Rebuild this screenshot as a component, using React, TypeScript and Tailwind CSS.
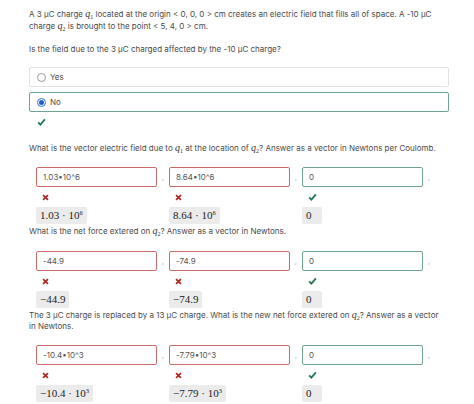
import React from 'react';

const sans = { fontFamily: 'Inter, "Noto Sans", sans-serif' };

function Q({ n }: { n: number }) {
  return (
    <span className="font-['Liberation_Serif',serif] italic text-[10px] leading-[11px] text-[#333]">
      q<span className="relative top-[2px] text-[6px] not-italic leading-none">{n}</span>
    </span>
  );
}

function Check() {
  return (
    <svg viewBox="0 0 12 10" className="w-[9px] h-[8px]">
      <path d="M1.5 5.5 L4.5 8.5 L10.5 1.5" fill="none" stroke="#217a52" strokeWidth="2.4" />
    </svg>
  );
}

function Cross() {
  return (
    <svg viewBox="0 0 10 10" className="w-[7px] h-[7px]">
      <path d="M1.5 1.5 L8.5 8.5 M8.5 1.5 L1.5 8.5" fill="none" stroke="#b3261e" strokeWidth="2.4" />
    </svg>
  );
}

type Cell = { input: string; ok: boolean; answer: React.ReactNode };

function VectorRow({ cells }: { cells: Cell[] }) {
  return (
    <div className="flex pl-[7px]">
      {cells.map((c, i) => (
        <div key={i} className="flex">
          <div className="flex flex-col w-[121px]">
            <div
              className={`h-[20px] border rounded-[2px] bg-white flex items-center pl-[6px] text-[8px] text-[#555] ${
                c.ok ? 'border-[#6fa58c]' : 'border-[#cd6b6b]'
              }`}
            >
              {c.input}
            </div>
            <div className="h-[20px] flex items-center pl-[6px]">{c.ok ? <Check /> : <Cross />}</div>
            <div className="flex">
              <div className="h-[17px] min-w-[20px] bg-[#ebebeb] rounded-[2px] px-[4px] flex items-center font-['Liberation_Serif',serif] text-[11px] text-[#222]">
                {c.answer}
              </div>
            </div>
          </div>
          <div className="w-[12px] h-[20px] flex items-end justify-center pb-[4px] text-[8px] text-[#bbb]">,</div>
        </div>
      ))}
    </div>
  );
}

function Pow({ base, exp }: { base: string; exp: string }) {
  return (
    <span>
      {base} · 10<span className="relative -top-[4px] text-[6.5px]">{exp}</span>
    </span>
  );
}

export default function App() {
  return (
    <div className="w-[474px] h-[404px] bg-white overflow-hidden pl-[29px] pr-[20px] pt-[8px] text-[8px] leading-[11px] text-[#4a4a4a]" style={sans}>
      <p>
        A 3 μC charge <Q n={1} /> located at the origin &lt; 0, 0, 0 &gt; cm creates an electric field that fills all of space. A -10 μC charge <Q n={2} /> is brought to the point &lt; 5, 4, 0 &gt; cm.
      </p>
      <p className="mt-[12px]">Is the field due to the 3 μC charged affected by the -10 μC charge?</p>

      <div className="mt-[12px] mr-[5px] flex flex-col gap-[5px]">
        <div className="h-[20px] border border-[#e2e2e2] rounded-[2px] flex items-center pl-[7px] gap-[4px]">
          <span className="w-[9px] h-[9px] rounded-full border border-[#999] bg-white" />
          <span>Yes</span>
        </div>
        <div className="h-[20px] border border-[#6fa58c] rounded-[2px] flex items-center pl-[7px] gap-[4px]">
          <span className="w-[9px] h-[9px] rounded-full border border-[#2f6fd6] bg-white flex items-center justify-center">
            <span className="w-[5px] h-[5px] rounded-full bg-[#1f5fd1]" />
          </span>
          <span>No</span>
        </div>
      </div>
      <div className="h-[20px] flex items-center pl-[8px]">
        <Check />
      </div>

      <p className="mt-[10px]">
        What is the vector electric field due to <Q n={1} /> at the location of <Q n={2} />? Answer as a vector in Newtons per Coulomb.
      </p>
      <div className="mt-[13px]">
        <VectorRow
          cells={[
            { input: '1.03•10^6', ok: false, answer: <Pow base="1.03" exp="6" /> },
            { input: '8.64•10^6', ok: false, answer: <Pow base="8.64" exp="6" /> },
            { input: '0', ok: true, answer: '0' },
          ]}
        />
      </div>
      <p className="mt-[1px]">
        What is the net force extered on <Q n={2} />? Answer as a vector in Newtons.
      </p>
      <div className="mt-[14px]">
        <VectorRow
          cells={[
            { input: '-44.9', ok: false, answer: '−44.9' },
            { input: '-74.9', ok: false, answer: '−74.9' },
            { input: '0', ok: true, answer: '0' },
          ]}
        />
      </div>
      <p className="mt-[1px] pr-[10px]">
        The 3 μC charge is replaced by a 13 μC charge. What is the new net force extered on <Q n={2} />? Answer as a vector in Newtons.
      </p>
      <div className="mt-[13px]">
        <VectorRow
          cells={[
            { input: '-10.4•10^3', ok: false, answer: <Pow base="−10.4" exp="3" /> },
            { input: '-7.79•10^3', ok: false, answer: <Pow base="−7.79" exp="3" /> },
            { input: '0', ok: true, answer: '0' },
          ]}
        />
      </div>
    </div>
  );
}
